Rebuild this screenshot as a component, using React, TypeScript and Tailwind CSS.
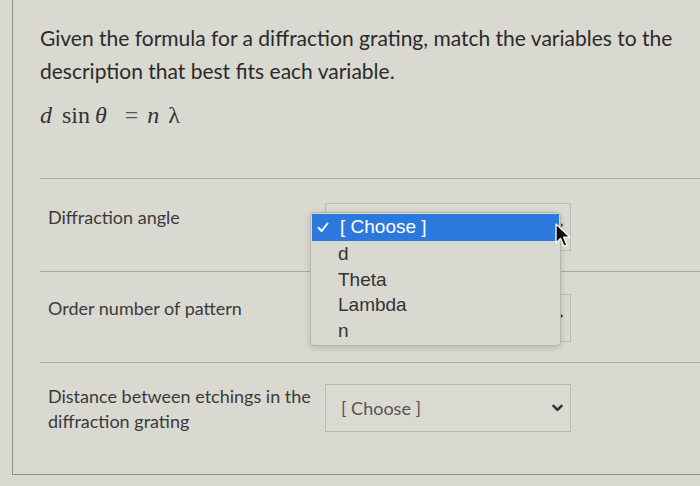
import React from 'react';

function Chevron() {
  return (
    <svg width="11" height="8" viewBox="0 0 11 8" className="shrink-0">
      <path d="M1.5 1.8 L5.5 5.8 L9.5 1.8" fill="none" stroke="#333" strokeWidth="2.6" strokeLinecap="round" strokeLinejoin="round" />
    </svg>
  );
}

function SelectBox() {
  return (
    <div className="w-[246px] h-[48px] border border-[#b9b9b0] bg-[#dadad2] flex items-center justify-between pl-[15px] pr-[7px]">
      <span className="text-[18px] text-[#555] font-['Lato']">[ Choose ]</span>
      <Chevron />
    </div>
  );
}

function Cursor() {
  return (
    <svg width="18" height="26" viewBox="0 0 18 26" className="absolute left-[244px] top-[10px]">
      <path d="M1 1 L1 20 L5.5 15.5 L9 23.5 L12 22 L8.6 14.3 L15 14.3 Z" fill="#111" stroke="#f4f4f0" strokeWidth="1.4" strokeLinejoin="round" />
    </svg>
  );
}

function Check() {
  return (
    <svg width="12" height="11" viewBox="0 0 12 11" className="mr-[11px] shrink-0">
      <path d="M1.5 5.8 L4.6 9 L10.5 1.5" fill="none" stroke="#fff" strokeWidth="2" strokeLinecap="round" strokeLinejoin="round" />
    </svg>
  );
}

function Dropdown() {
  const options = ['d', 'Theta', 'Lambda', 'n'];
  return (
    <div className="absolute z-10 left-[-15px] top-[9px] w-[251px] h-[134px] rounded-[4px] border border-[#b5b5ad] bg-[#d9d9d1] shadow-[0_2px_6px_rgba(0,0,0,0.15)] pt-[1px] font-['Liberation_Sans',sans-serif] text-[19px]">
      <div className="h-[27px] mx-[1px] bg-[#2c79de] text-white flex items-center pl-[5px]">
        <Check />
        <span>[ Choose ]</span>
      </div>
      <div className="pl-[27px] text-[#333] leading-[25.5px]">
        {options.map((o) => (
          <div key={o}>{o}</div>
        ))}
      </div>
      <Cursor />
    </div>
  );
}

export default function App() {
  return (
    <div className="w-[700px] h-[486px] bg-[#d9d9d1] overflow-hidden font-['Lato',sans-serif] text-[#333]">
      <div className="ml-[12px] h-[475px] border-l border-b border-[#8f8f88] pl-[27px] pt-[21px]">
        <p className="text-[21px] leading-[33px] text-[#2a2a2a]">
          Given the formula for a diffraction grating, match the variables to the description that best fits each variable.
        </p>
        <div className="mt-[14px] h-[28px] flex items-center font-['Liberation_Serif',serif] text-[24px] leading-[28px] text-[#333]">
          <i>d</i>
          <span className="ml-[10px]">sin</span>
          <i className="ml-[5px]">θ</i>
          <span className="ml-[18px] text-[#555]">=</span>
          <i className="ml-[9px]">n</i>
          <span className="ml-[9px]">λ</span>
        </div>

        <div className="mt-[49px] border-t border-[#a9a9a1]">
          {/* Row 1 */}
          <div className="flex pt-[24px] pb-[20px] pl-[8px] border-b border-[#a9a9a1]">
            <div className="w-[277px] pt-[2px] text-[18px] leading-[25px] text-[#3a3a3a]">Diffraction angle</div>
            <div className="relative z-10">
              <SelectBox />
              <Dropdown />
            </div>
          </div>
          {/* Row 2 */}
          <div className="flex pt-[22px] pb-[20px] pl-[8px] border-b border-[#a9a9a1]">
            <div className="w-[277px] pt-[2px] text-[18px] leading-[25px] text-[#3a3a3a]">Order number of pattern</div>
            <SelectBox />
          </div>
          {/* Row 3 */}
          <div className="flex pt-[21px] pl-[8px]">
            <div className="w-[277px] text-[18px] leading-[25px] text-[#3a3a3a]">
              Distance between etchings in the diffraction grating
            </div>
            <SelectBox />
          </div>
        </div>
      </div>
    </div>
  );
}
